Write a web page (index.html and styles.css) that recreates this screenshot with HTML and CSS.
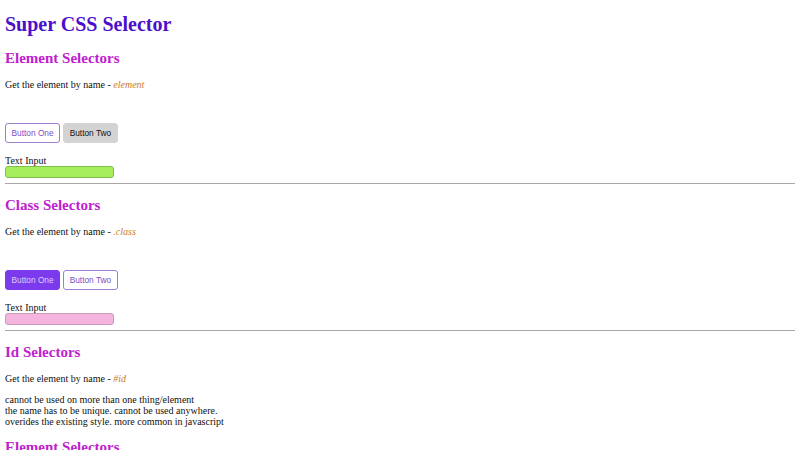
FILE: index.html
```html
<!DOCTYPE html>
<html>
<head>
<meta charset="utf-8">
<title>Super CSS Selector</title>
<link rel="stylesheet" href="styles.css">
</head>
<body>
<h1 class="title">Super CSS Selector</h1>

<section class="block">
  <h2 class="heading">Element Selectors</h2>
  <p class="desc">Get the element by name - <em class="sel">element</em></p>
  <div class="buttons">
    <button class="btn btn-outline">Button One</button>
    <button class="btn btn-gray">Button Two</button>
  </div>
  <label class="label">Text Input</label>
  <input class="field field-green" type="text">
</section>
<hr class="rule">

<section class="block">
  <h2 class="heading">Class Selectors</h2>
  <p class="desc">Get the element by name - <em class="sel">.class</em></p>
  <div class="buttons">
    <button class="btn btn-filled">Button One</button>
    <button class="btn btn-outline">Button Two</button>
  </div>
  <label class="label">Text Input</label>
  <input class="field field-pink" type="text">
</section>
<hr class="rule">

<section class="block">
  <h2 class="heading">Id Selectors</h2>
  <p class="desc">Get the element by name - <em class="sel">#id</em></p>
  <p class="desc notes">cannot be used on more than one thing/element<br>the name has to be unique. cannot be used anywhere.<br>overides the existing style. more common in javascript</p>
</section>

<section class="block">
  <h2 class="heading">Element Selectors</h2>
</section>
</body>
</html>
```

FILE: styles.css
```css
html, body {
  background: #ffffff;
}
body {
  margin: 0 5px 5px;
  padding: 0;
  font-family: "Liberation Serif", "Times New Roman", serif;
  font-size: 10px;
  color: #111111;
}
.title {
  font-size: 20px;
  font-weight: bold;
  margin: 13.4px 0;
  color: #4b0fcb;
}
.heading {
  font-size: 15px;
  font-weight: bold;
  margin: 12.45px 0;
  color: #bf20cf;
}
.desc {
  margin: 10px 0;
}
.notes {
  margin-top: 6.5px;
}
.sel {
  color: #cf7a2a;
  font-style: italic;
}
.buttons {
  display: flex;
  gap: 3px;
  margin-top: 33px;
}
.btn {
  box-sizing: border-box;
  height: 20px;
  padding: 0 5.5px;
  font-family: "Liberation Sans", Arial, sans-serif;
  font-size: 8.33px;
  border-radius: 3px;
  border: 1px solid transparent;
  cursor: pointer;
}
.btn-outline {
  background: #ffffff;
  border-color: #9b7fd0;
  color: #7a4fc8;
}
.btn-gray {
  background: #d3d3d3;
  border-color: #d3d3d3;
  color: #111111;
}
.btn-filled {
  background: #7c3aed;
  border-color: #7c3aed;
  color: #dccff8;
}
.label {
  display: block;
  margin-top: 12px;
}
.field {
  display: block;
  box-sizing: border-box;
  width: 109px;
  height: 12px;
  margin: 0;
  padding: 0 3px;
  border-radius: 3px;
  font-size: 8px;
}
.field-green {
  background: #a6ee5c;
  border: 1px solid #7cc04c;
}
.field-pink {
  background: #f5b4de;
  border: 1px solid #c79bbc;
}
.rule {
  margin: 5px 0;
  border: 0;
  height: 0;
  border-top: 1px solid #a8a8a8;
}
```
